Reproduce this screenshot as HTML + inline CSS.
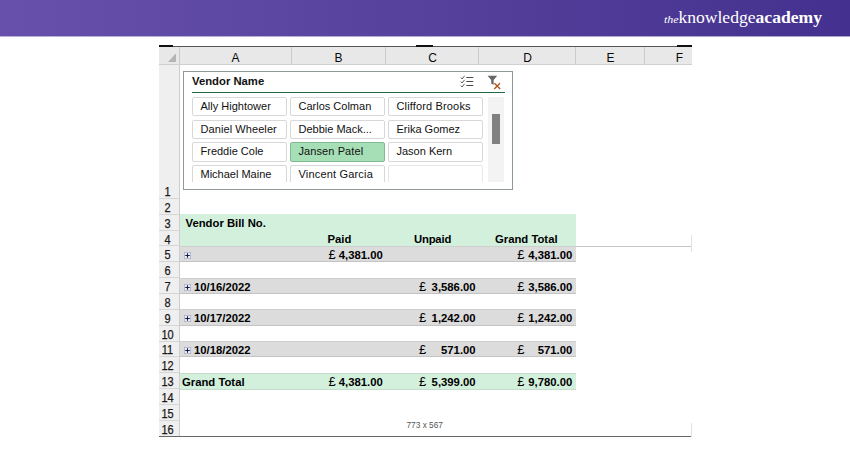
<!DOCTYPE html>
<html lang="en">
<head>
<meta charset="utf-8">
<title>Vendor pivot with slicer</title>
<style>
html,body{margin:0;padding:0;}
body{width:850px;height:450px;position:relative;overflow:hidden;background:#fff;
  font-family:"Liberation Sans",Arial,sans-serif;color:#111;}
.abs{position:absolute;}
/* ---------- top banner ---------- */
#banner{left:0;top:0;width:850px;height:36px;
  background:linear-gradient(90deg,#6650ac 0%,#56429c 50%,#44318f 100%);}
#banner2{left:0;top:36px;width:850px;height:1px;opacity:.45;
  background:linear-gradient(90deg,#6650ac 0%,#56429c 50%,#44318f 100%);}
#logo{right:28.2px;top:7px;height:22px;line-height:22px;white-space:nowrap;color:#fff;
  font-family:"Liberation Serif","Times New Roman",serif;font-size:16.6px;letter-spacing:0;
  transform:scaleX(1.06);transform-origin:100% 50%;}
#logo i{font-size:11.3px;font-style:italic;letter-spacing:-0.1px;}
#logo b{font-weight:bold;}
/* ---------- excel frame ---------- */
#topline{left:159px;top:46px;width:533px;height:1px;background:#555;}
.tick{top:45px;height:2px;background:#111;}
#colhdr{left:159px;top:47px;width:533px;height:18px;background:#e8e8e8;border-bottom:1px solid #d0d0d0;box-sizing:border-box;}
.ch{top:0;height:17px;line-height:22px;text-align:center;font-size:12px;color:#0a0a0a;
  border-right:1px solid #cbcbcb;box-sizing:border-box;}
#rowhdr{left:159px;top:65px;width:21px;height:372px;background:#efefef;border-right:1px solid #cdcdcd;box-sizing:border-box;}
.ch span{display:inline-block;}
.rh{left:-1.5px;width:19px;text-align:center;font-size:12.5px;color:#1a1a1a;height:16px;line-height:17px;transform:scaleX(.88);-webkit-text-stroke:.25px #1a1a1a;}
.rsep{left:0;width:20px;height:1px;background:#d6d6d6;}
#botline{left:159px;top:436.4px;width:533px;height:1px;background:#666;}
/* ---------- slicer ---------- */
#slicer{left:183px;top:71px;width:330px;height:119px;border:1px solid #8f9a94;box-sizing:border-box;background:#fff;}
#sl-title{left:8px;top:2px;font-size:11.3px;font-weight:bold;line-height:14px;color:#111;}
#sl-rule{left:8px;top:20px;width:313px;height:1.4px;background:#1f6b43;}
#sl-body{left:8px;top:24.5px;width:292px;height:85px;overflow:hidden;}
.sb{width:95px;height:19.5px;box-sizing:border-box;border:1px solid #d8d8d8;border-radius:2px;background:#fff;
  font-size:11px;line-height:17.4px;padding-left:7.5px;white-space:nowrap;color:#111;}
.sb.sel{background:#a6dfb6;border-color:#7dbb92;}
#sl-track{left:304.2px;top:24.5px;width:16px;height:85px;background:#f3f3f3;}
#sl-thumb{left:308px;top:42px;width:8px;height:30px;background:#808080;}
/* ---------- pivot ---------- */
.band{left:180px;width:396px;}
.green{background:#d3f0dd;}
.grey{background:#dcdcdc;border-top:1px solid #cfcfcf;border-bottom:1px solid #c4c4c4;box-sizing:border-box;}
.t{font-size:11.3px;font-weight:bold;line-height:16px;height:16px;white-space:nowrap;color:#000;}
.r{text-align:right;}
.t.cur{font-weight:normal;font-size:13px;line-height:15.5px;}
</style>
</head>
<body>
<div id="banner" class="abs"></div><div id="banner2" class="abs"></div>
<div id="logo" class="abs"><i>the</i>knowledge<b>academy</b></div>

<!-- excel frame -->
<div id="topline" class="abs"></div>
<div class="abs tick" style="left:159px;width:14px;"></div>
<div class="abs tick" style="left:416px;width:17px;"></div>
<div class="abs tick" style="left:677px;width:15px;"></div>
<div id="colhdr" class="abs">
  <div class="abs ch" style="left:0;width:21px;"></div>
  <div class="abs ch" style="left:21px;width:112px;"><span>A</span></div>
  <div class="abs ch" style="left:133px;width:94px;"><span>B</span></div>
  <div class="abs ch" style="left:227px;width:93px;padding-left:1px;"><span>C</span></div>
  <div class="abs ch" style="left:320px;width:97px;padding-left:1px;"><span>D</span></div>
  <div class="abs ch" style="left:417px;width:69px;padding-left:1px;"><span>E</span></div>
  <div class="abs ch" style="left:486px;width:47px;border-right:0;padding-left:22px;"><span>F</span></div>
  <svg class="abs" style="left:9px;top:6px;" width="8.3" height="9" viewBox="0 0 8.3 9"><path d="M8.3 0 L8.3 9 L0 9 Z" fill="#b4b4b4"/></svg>
</div>
<div id="rowhdr" class="abs">
  <div class="abs rh" style="top:118.9px;">1</div>
  <div class="abs rsep" style="top:133px;"></div>
  <div class="abs rh" style="top:134.7px;">2</div>
  <div class="abs rsep" style="top:149px;"></div>
  <div class="abs rh" style="top:150.6px;">3</div>
  <div class="abs rsep" style="top:165px;"></div>
  <div class="abs rh" style="top:166.5px;">4</div>
  <div class="abs rsep" style="top:180px;"></div>
  <div class="abs rh" style="top:182.3px;">5</div>
  <div class="abs rsep" style="top:196px;"></div>
  <div class="abs rh" style="top:198.1px;">6</div>
  <div class="abs rsep" style="top:212px;"></div>
  <div class="abs rh" style="top:214.0px;">7</div>
  <div class="abs rsep" style="top:228px;"></div>
  <div class="abs rh" style="top:229.8px;">8</div>
  <div class="abs rsep" style="top:244px;"></div>
  <div class="abs rh" style="top:245.7px;">9</div>
  <div class="abs rsep" style="top:260px;"></div>
  <div class="abs rh" style="top:261.5px;">10</div>
  <div class="abs rsep" style="top:276px;"></div>
  <div class="abs rh" style="top:277.4px;">11</div>
  <div class="abs rsep" style="top:291px;"></div>
  <div class="abs rh" style="top:293.3px;">12</div>
  <div class="abs rsep" style="top:307px;"></div>
  <div class="abs rh" style="top:309.1px;">13</div>
  <div class="abs rsep" style="top:323px;"></div>
  <div class="abs rh" style="top:324.9px;">14</div>
  <div class="abs rsep" style="top:339px;"></div>
  <div class="abs rh" style="top:340.8px;">15</div>
  <div class="abs rsep" style="top:355px;"></div>
  <div class="abs rh" style="top:356.7px;">16</div>
</div>
<div id="botline" class="abs"></div>

<!-- slicer -->
<div id="slicer" class="abs">
  <div id="sl-title" class="abs">Vendor Name</div>
  <!-- multi-select icon -->
  <svg class="abs" style="left:275.6px;top:2px;" width="15" height="15" viewBox="0 0 15 15" fill="none" stroke="#484848" stroke-width="0.9">
    <path d="M0.8 3.6 L2.1 5 L4.6 1.8"/><path d="M6.3 3.5 H13.3" stroke-width="1"/>
    <path d="M0.8 7.6 L2.1 9 L4.6 5.8"/><path d="M6.3 7.5 H13.3" stroke-width="1"/>
    <path d="M0.8 11.6 L2.1 13 L4.6 9.8"/><path d="M6.3 11.5 H13.3" stroke-width="1"/>
  </svg>
  <!-- clear filter icon -->
  <svg class="abs" style="left:303px;top:3px;" width="16" height="16" viewBox="0 0 16 16">
    <path d="M0.6 0.8 H10.2 L6.6 5 V10 L4.2 8.6 V5 Z" fill="#666"/>
    <path d="M7.4 8.2 L13.2 14 M13 8.2 L7.2 14" stroke="#ad551a" stroke-width="1.35" fill="none"/>
  </svg>
  <div id="sl-rule" class="abs"></div>
  <div id="sl-body" class="abs">
    <div class="abs sb" style="left:0;top:0;">Ally Hightower</div>
    <div class="abs sb" style="left:98px;top:0;">Carlos Colman</div>
    <div class="abs sb" style="left:196px;top:0;letter-spacing:.15px;">Clifford Brooks</div>
    <div class="abs sb" style="left:0;top:23px;letter-spacing:.08px;">Daniel Wheeler</div>
    <div class="abs sb" style="left:98px;top:23px;">Debbie Mack...</div>
    <div class="abs sb" style="left:196px;top:23px;">Erika Gomez</div>
    <div class="abs sb" style="left:0;top:45.8px;">Freddie Cole</div>
    <div class="abs sb sel" style="left:98px;top:45.8px;letter-spacing:.09px;">Jansen Patel</div>
    <div class="abs sb" style="left:196px;top:45.8px;">Jason Kern</div>
    <div class="abs sb" style="left:0;top:68.4px;">Michael Maine</div>
    <div class="abs sb" style="left:98px;top:68.4px;letter-spacing:.18px;">Vincent Garcia</div>
    <div class="abs sb" style="left:196px;top:68.4px;border-color:#e8e8e8;"></div>
  </div>
  <div id="sl-track" class="abs"></div>
  <div id="sl-thumb" class="abs"></div>
</div>

<!-- pivot table bands -->
<div class="abs band green" style="top:214px;height:32.5px;"></div>
<div class="abs band grey"  style="top:246.2px;height:15.8px;"></div>
<div class="abs band grey"  style="top:277.8px;height:15.8px;"></div>
<div class="abs band grey"  style="top:309.4px;height:16.2px;"></div>
<div class="abs band grey"  style="top:340.8px;height:16.5px;"></div>
<div class="abs band green" style="top:372.8px;height:16.8px;border-top:1px solid #c3dccb;border-bottom:1px solid #c3dccb;box-sizing:border-box;"></div>
<div class="abs" style="left:576px;top:245.8px;width:116px;height:1px;background:#c4c4c4;"></div>
<div class="abs" style="left:691px;top:235px;width:1px;height:17px;background:#e2e2e2;"></div>
<div class="abs" style="left:691px;top:423px;width:1px;height:14px;background:#e2e2e2;"></div>

<!-- pivot header text -->
<div class="abs t" style="left:185.5px;top:215px;">Vendor Bill No.</div>
<div class="abs t" style="left:327.5px;top:230.7px;">Paid</div>
<div class="abs t" style="left:414px;top:230.7px;letter-spacing:-.2px;">Unpaid</div>
<div class="abs t" style="left:495px;top:231.1px;">Grand Total</div>

<!-- row 5 -->
<svg class="abs" style="left:184.2px;top:252px;" width="7" height="7" viewBox="0 0 7 7"><rect x="0.4" y="0.4" width="6.2" height="6.2" fill="#f3f5fa" stroke="#a9b0c8" stroke-width="0.8"/><path d="M1.2 3.5 H5.8 M3.5 1.2 V5.8" stroke="#161c4a" stroke-width="1.15" fill="none"/></svg>
<div class="abs t cur" style="left:328.4px;top:247px;">£</div>
<div class="abs t r" style="left:322.8px;width:60px;top:247px;">4,381.00</div>
<div class="abs t cur" style="left:517.3px;top:247px;">£</div>
<div class="abs t r" style="left:512.3px;width:60px;top:247px;">4,381.00</div>
<!-- row 7 -->
<svg class="abs" style="left:184.2px;top:283.5px;" width="7" height="7" viewBox="0 0 7 7"><rect x="0.4" y="0.4" width="6.2" height="6.2" fill="#f3f5fa" stroke="#a9b0c8" stroke-width="0.8"/><path d="M1.2 3.5 H5.8 M3.5 1.2 V5.8" stroke="#161c4a" stroke-width="1.15" fill="none"/></svg>
<div class="abs t" style="left:194px;top:278.5px;">10/16/2022</div>
<div class="abs t cur" style="left:419.0px;top:278.5px;">£</div>
<div class="abs t r" style="left:415.6px;width:60px;top:278.5px;">3,586.00</div>
<div class="abs t cur" style="left:517.3px;top:278.5px;">£</div>
<div class="abs t r" style="left:512.3px;width:60px;top:278.5px;">3,586.00</div>
<!-- row 9 -->
<svg class="abs" style="left:184.2px;top:315px;" width="7" height="7" viewBox="0 0 7 7"><rect x="0.4" y="0.4" width="6.2" height="6.2" fill="#f3f5fa" stroke="#a9b0c8" stroke-width="0.8"/><path d="M1.2 3.5 H5.8 M3.5 1.2 V5.8" stroke="#161c4a" stroke-width="1.15" fill="none"/></svg>
<div class="abs t" style="left:194px;top:310px;">10/17/2022</div>
<div class="abs t cur" style="left:419.0px;top:310px;">£</div>
<div class="abs t r" style="left:415.6px;width:60px;top:310px;">1,242.00</div>
<div class="abs t cur" style="left:517.3px;top:310px;">£</div>
<div class="abs t r" style="left:512.3px;width:60px;top:310px;">1,242.00</div>
<!-- row 11 -->
<svg class="abs" style="left:184.2px;top:346.8px;" width="7" height="7" viewBox="0 0 7 7"><rect x="0.4" y="0.4" width="6.2" height="6.2" fill="#f3f5fa" stroke="#a9b0c8" stroke-width="0.8"/><path d="M1.2 3.5 H5.8 M3.5 1.2 V5.8" stroke="#161c4a" stroke-width="1.15" fill="none"/></svg>
<div class="abs t" style="left:194px;top:341.5px;">10/18/2022</div>
<div class="abs t cur" style="left:419.0px;top:341.5px;">£</div>
<div class="abs t r" style="left:415.6px;width:60px;top:341.5px;">571.00</div>
<div class="abs t cur" style="left:517.3px;top:341.5px;">£</div>
<div class="abs t r" style="left:512.3px;width:60px;top:341.5px;">571.00</div>
<!-- row 13 -->
<div class="abs t" style="left:182px;top:373.5px;">Grand Total</div>
<div class="abs t cur" style="left:328.4px;top:373.5px;">£</div>
<div class="abs t r" style="left:322.8px;width:60px;top:373.5px;">4,381.00</div>
<div class="abs t cur" style="left:419.0px;top:373.5px;">£</div>
<div class="abs t r" style="left:415.6px;width:60px;top:373.5px;">5,399.00</div>
<div class="abs t cur" style="left:517.3px;top:373.5px;">£</div>
<div class="abs t r" style="left:512.3px;width:60px;top:373.5px;">9,780.00</div>

<div class="abs" style="left:406.5px;top:419.6px;font-size:8.3px;line-height:10px;color:#555;white-space:nowrap;">773 x 567</div>
</body>
</html>
